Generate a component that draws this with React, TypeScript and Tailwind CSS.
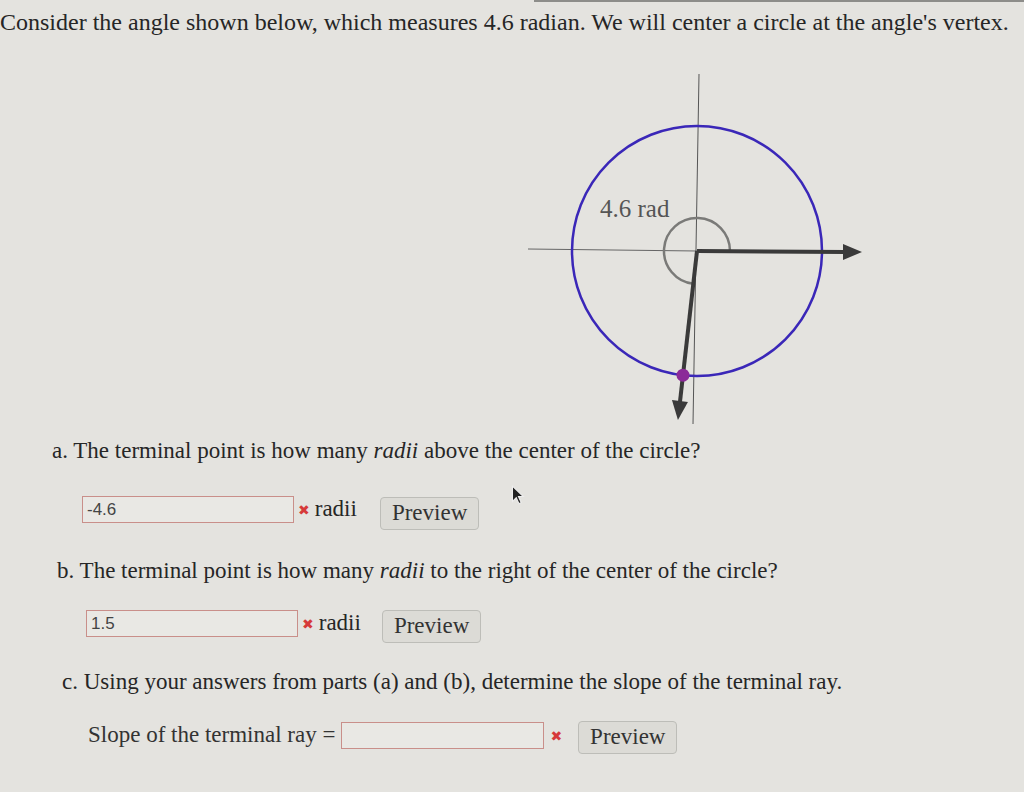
import React from "react";

function XMark() {
  return <span className="text-[#d63a3a] text-[14px] leading-none font-['DejaVu_Sans',sans-serif]">✖</span>;
}

function AnswerInput({ value, w }: { value: string; w: string }) {
  return (
    <div className={`${w} h-[27px] border border-[#c98f8a] bg-[#e9e8e4] flex items-center px-[4px] font-['Liberation_Sans',sans-serif] text-[17px] text-[#444]`}>
      {value}
    </div>
  );
}

function PreviewBtn() {
  return (
    <div className="h-[33px] px-[11px] border border-[#bdbdb8] rounded-[4px] bg-[#dcdbd6] flex items-center text-[23px] text-[#333]">
      Preview
    </div>
  );
}

export default function App() {
  const cx = 697;
  const cy = 187;
  const r = 125;
  const a = 4.6;
  const ex = cx + Math.cos(a) * 170;
  const ey = cy - Math.sin(a) * 170;
  const lx = cx + Math.cos(a) * 152;
  const ly = cy - Math.sin(a) * 152;
  const px = cx + Math.cos(a) * r;
  const py = cy - Math.sin(a) * r;
  const sr = 33;
  const sx = cx + Math.cos(a) * sr;
  const sy = cy - Math.sin(a) * sr;
  return (
    <div className="w-[1024px] h-[792px] bg-[#e4e3df] overflow-hidden relative font-['Liberation_Serif',serif] text-[#262626]">
      <div className="flex justify-end">
        <div className="w-[490px] h-[2px] bg-[#8d8d8a]" />
      </div>
      <div className="mt-[7px] text-[24px] leading-[26px] whitespace-nowrap">
        Consider the angle shown below, which measures 4.6 radian. We will center a circle at the angle's vertex.
      </div>
      <svg width="1024" height="370" className="block mt-[29px]">
        <line x1="699" y1="10" x2="693" y2="360" stroke="#555" strokeWidth="1" />
        <line x1="528" y1="185" x2="697" y2="187" stroke="#666" strokeWidth="1" />
        <circle cx={cx} cy={cy} r={r} fill="none" stroke="#3a27b8" strokeWidth="2.5" />
        <path d={`M ${cx + sr} ${cy} A ${sr} ${sr} 0 1 0 ${sx} ${sy}`} fill="none" stroke="#7a7a78" strokeWidth="2.5" />
        <line x1={cx} y1={cy} x2="846" y2={cy + 1} stroke="#3a3a3a" strokeWidth="4" />
        <polygon points="843,180 862,188 843,196" fill="#3a3a3a" />
        <line x1={cx} y1={cy} x2={lx} y2={ly} stroke="#3a3a3a" strokeWidth="4" />
        <polygon points={`${lx - 8},${ly - 2} ${lx + 8},${ly} ${ex},${ey}`} fill="#3a3a3a" />
        <circle cx={px} cy={py} r="6.5" fill="#8b2a98" />
        <text x="600" y="153" fontFamily="Liberation Serif, serif" fontSize="25" fill="#555">4.6 rad</text>
      </svg>
      <div className="ml-[52px] mt-[4px] text-[23px] leading-[26px]">
        a. The terminal point is how many <i>radii</i> above the center of the circle?
      </div>
      <div className="ml-[82px] mt-[25px] flex items-center">
        <AnswerInput value="-4.6" w="w-[212px]" />
        <div className="ml-[4px] flex items-center gap-[5px] text-[23px]">
          <XMark />
          <span>radii</span>
        </div>
        <div className="ml-[23px] mt-[8px]">
          <PreviewBtn />
        </div>
      </div>
      <div className="ml-[57px] mt-[28px] text-[23px] leading-[26px]">
        b. The terminal point is how many <i>radii</i> to the right of the center of the circle?
      </div>
      <div className="ml-[86px] mt-[20px] flex items-center">
        <AnswerInput value="1.5" w="w-[212px]" />
        <div className="ml-[4px] flex items-center gap-[5px] text-[23px]">
          <XMark />
          <span>radii</span>
        </div>
        <div className="ml-[21px] mt-[6px]">
          <PreviewBtn />
        </div>
      </div>
      <div className="ml-[62px] mt-[26px] text-[23px] leading-[26px]">
        c. Using your answers from parts (a) and (b), determine the slope of the terminal ray.
      </div>
      <div className="ml-[88px] mt-[22px] flex items-center">
        <span className="text-[23px] text-[#333]">Slope of the terminal ray =</span>
        <div className="ml-[6px]">
          <AnswerInput value="" w="w-[203px]" />
        </div>
        <div className="ml-[6px]">
          <XMark />
        </div>
        <div className="ml-[16px] mt-[4px]">
          <PreviewBtn />
        </div>
      </div>
      <svg className="absolute left-[510px] top-[484px]" width="18" height="24" viewBox="0 0 16 22">
        <path d="M2 2 L2 16 L5.5 12.5 L8 18 L10 17 L7.5 11.5 L12 11.5 Z" fill="#222" stroke="#eee" strokeWidth="1" />
      </svg>
    </div>
  );
}
